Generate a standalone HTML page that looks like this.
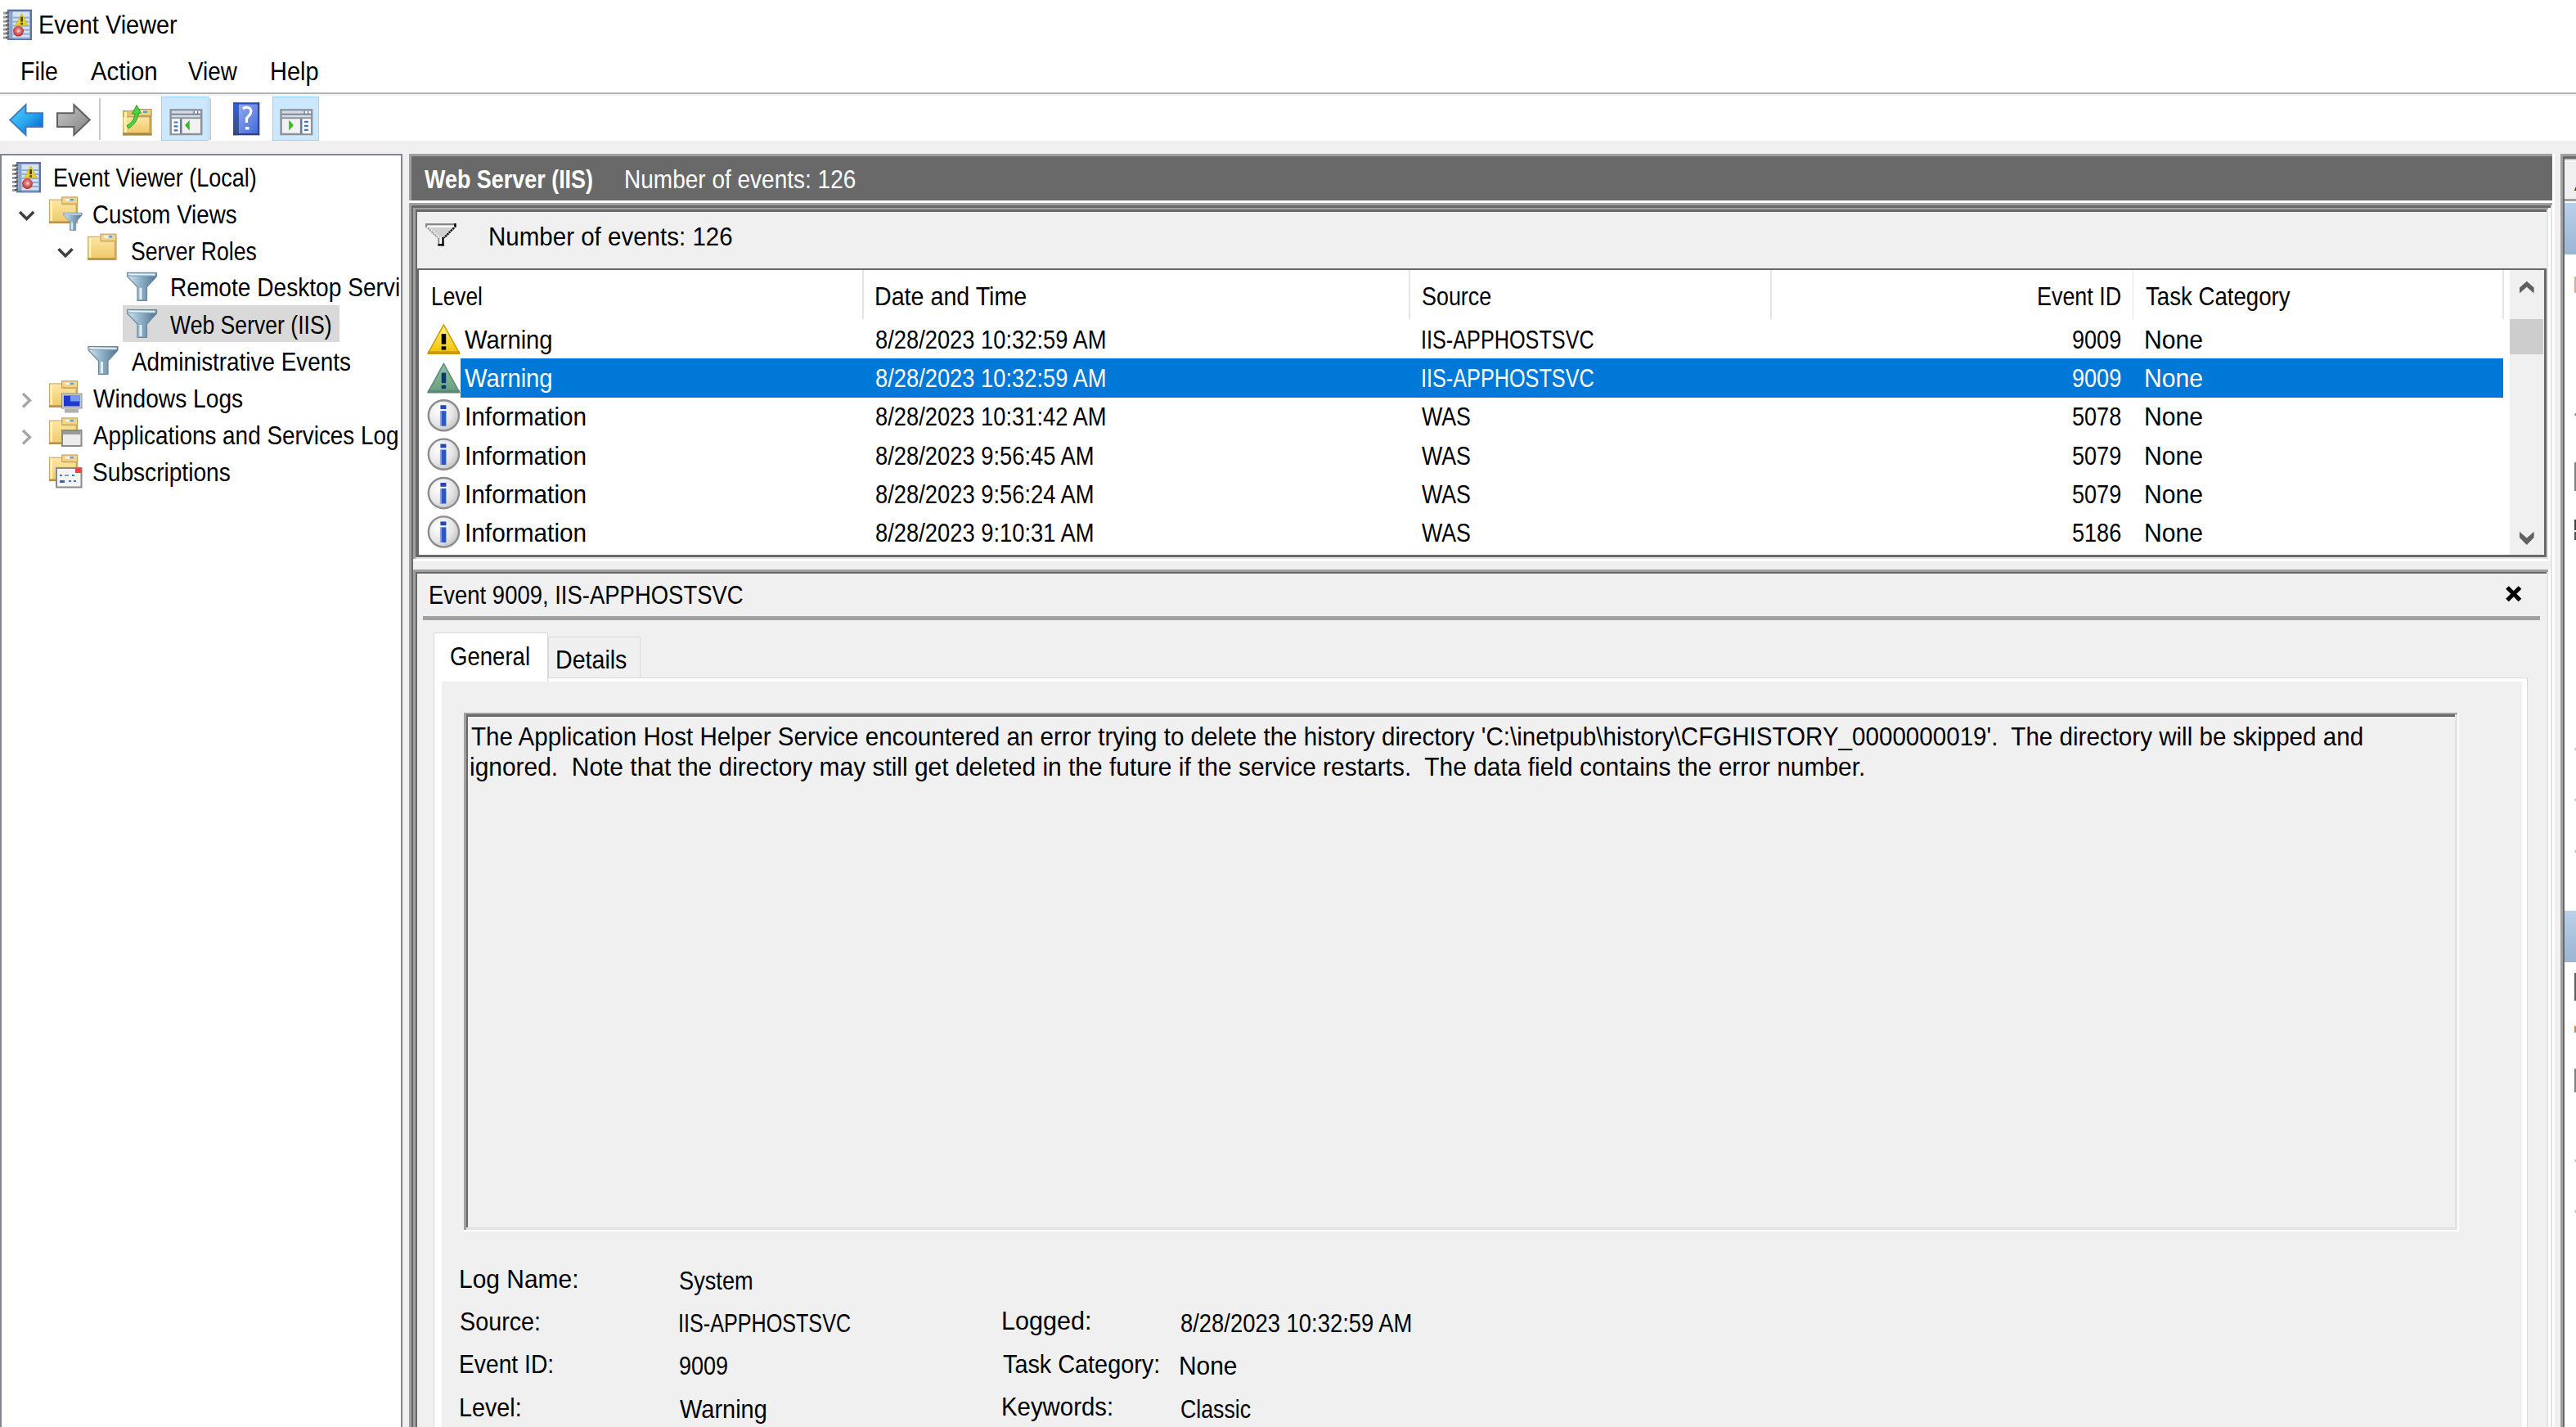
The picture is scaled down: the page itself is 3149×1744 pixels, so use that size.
<!DOCTYPE html>
<html><head><meta charset="utf-8"><style>
html,body{margin:0;padding:0;width:3149px;height:1744px;overflow:hidden;background:#f0f0f0;position:relative}
body div,body svg{position:absolute}
.t{position:absolute;white-space:pre;font-family:"Liberation Sans", sans-serif;font-size:30.5px;line-height:30.5px;transform-origin:0 0}
</style></head><body>
<div style="left:0px;top:0px;width:3149px;height:172px;background:#fff;"></div>
<div style="left:0px;top:113px;width:3149px;height:2px;background:#b4b4b4;"></div>
<div style="left:0px;top:115px;width:3149px;height:2px;background:#f2f6fa;"></div>
<div style="left:197px;top:118px;width:58px;height:54px;background:#cce8ff;box-shadow:inset 0 0 0 1px #99d1ff"></div>
<div style="left:332.5px;top:118px;width:57.5px;height:54px;background:#cce8ff;box-shadow:inset 0 0 0 1px #99d1ff"></div>
<div style="left:121px;top:120px;width:2px;height:51px;background:#c8c8c8;"></div>
<div style="left:256px;top:120px;width:2px;height:51px;background:#c8c8c8;"></div>
<div style="left:0px;top:188px;width:492.3px;height:1556px;background:#828790;"></div>
<div style="left:2px;top:190.4px;width:488px;height:1554px;background:#fff;"></div>
<div style="left:150px;top:373px;width:265px;height:45px;background:#d9d9d9;"></div>
<div style="left:500px;top:188px;width:2622.5px;height:60px;background:#fff;"></div>
<div style="left:500px;top:188px;width:2620px;height:57px;background:#a0a0a0;"></div>
<div style="left:503px;top:191px;width:2617px;height:54px;background:#696969;"></div>
<div style="left:500px;top:248px;width:2622.5px;height:1496px;background:#fff;"></div>
<div style="left:500px;top:248px;width:2620px;height:1496px;background:#a0a0a0;"></div>
<div style="left:502.5px;top:251px;width:2617.5px;height:1493px;background:#e3e3e3;"></div>
<div style="left:502.5px;top:251px;width:2615px;height:1493px;background:#696969;"></div>
<div style="left:505px;top:253.5px;width:2612.5px;height:1490.5px;background:#f0f0f0;"></div>
<div style="left:505px;top:253.5px;width:2612.5px;height:432.3px;background:#fff;"></div>
<div style="left:505px;top:253.5px;width:2610px;height:429.8px;background:#a0a0a0;"></div>
<div style="left:507.5px;top:256px;width:2607.5px;height:427.3px;background:#e3e3e3;"></div>
<div style="left:507.5px;top:256px;width:2605px;height:424.8px;background:#696969;"></div>
<div style="left:510px;top:258.5px;width:2602.5px;height:422.3px;background:#f0f0f0;"></div>
<div style="left:510px;top:328px;width:2602.5px;height:352.8px;background:#696969;"></div>
<div style="left:512px;top:330px;width:2598px;height:348.3px;background:#fff;"></div>
<div style="left:562.5px;top:438px;width:2497.5px;height:47.5px;background:#0078d7;"></div>
<div style="left:1054px;top:330px;width:1.5px;height:60px;background:#e5e5e5;"></div>
<div style="left:1722px;top:330px;width:1.5px;height:60px;background:#e5e5e5;"></div>
<div style="left:2164px;top:330px;width:1.5px;height:60px;background:#e5e5e5;"></div>
<div style="left:2606.5px;top:330px;width:1.5px;height:60px;background:#e5e5e5;"></div>
<div style="left:3059px;top:330px;width:1.5px;height:60px;background:#e5e5e5;"></div>
<div style="left:3068px;top:330px;width:42px;height:348.3px;background:#f0f0f0;"></div>
<div style="left:3068px;top:390px;width:41px;height:43px;background:#cdcdcd;"></div>
<div style="left:505px;top:696px;width:2612.5px;height:1068px;background:#fff;"></div>
<div style="left:505px;top:696px;width:2610px;height:1065.5px;background:#a0a0a0;"></div>
<div style="left:507.5px;top:698.5px;width:2607.5px;height:1063px;background:#e3e3e3;"></div>
<div style="left:507.5px;top:698.5px;width:2605px;height:1060.5px;background:#696969;"></div>
<div style="left:510px;top:701px;width:2602.5px;height:1058px;background:#f0f0f0;"></div>
<div style="left:517px;top:753px;width:2588px;height:4.5px;background:#a0a0a0;"></div>
<div style="left:530px;top:828px;width:2560px;height:936px;background:#d9d9d9;"></div>
<div style="left:531px;top:829px;width:2558px;height:935px;background:#fff;"></div>
<div style="left:669.6px;top:778px;width:113px;height:51px;background:#d9d9d9;"></div>
<div style="left:670.6px;top:779px;width:111px;height:49px;background:#f0f0f0;"></div>
<div style="left:530px;top:773.2px;width:139.6px;height:60px;background:#d9d9d9;"></div>
<div style="left:531px;top:774.2px;width:137.6px;height:60px;background:#fff;"></div>
<div style="left:540px;top:833px;width:2543px;height:931px;background:#f0f0f0;"></div>
<div style="left:567.4px;top:870.7px;width:2439.1px;height:634.8px;background:#fff;"></div>
<div style="left:567.4px;top:870.7px;width:2436.6px;height:632.3px;background:#a0a0a0;"></div>
<div style="left:569.9px;top:873.2px;width:2434.1px;height:629.8px;background:#e3e3e3;"></div>
<div style="left:569.9px;top:873.2px;width:2431.6px;height:627.3px;background:#696969;"></div>
<div style="left:572.4px;top:875.7px;width:2429.1px;height:624.8px;background:#f0f0f0;"></div>
<div style="left:3130px;top:188px;width:30px;height:1556px;background:#a0a0a0;"></div>
<div style="left:3132.8px;top:191px;width:30px;height:1553px;background:#696969;"></div>
<div style="left:3135px;top:193.5px;width:30px;height:1550.5px;background:#fff;"></div>
<div style="left:3135px;top:193.5px;width:30px;height:2.5px;background:#c4c4c4;"></div>
<div style="left:3135px;top:198px;width:30px;height:45px;background:#f0f0f0;"></div>
<div style="left:3135px;top:243px;width:30px;height:2.5px;background:#a0a0a0;"></div>
<div style="left:3135px;top:248px;width:30px;height:62.5px;background:linear-gradient(#bad1ea,#9ab4d3);"></div>
<div style="left:3135px;top:1113px;width:30px;height:63px;background:linear-gradient(#bad1ea,#9ab4d3);"></div>
<span class="t" style="left:47.00px;top:15px;color:#000;transform:scaleX(0.9475)">Event Viewer</span>
<span class="t" style="left:24.93px;top:72px;color:#000;transform:scaleX(0.9332)">File</span>
<span class="t" style="left:110.60px;top:72px;color:#000;transform:scaleX(0.9637)">Action</span>
<span class="t" style="left:230.00px;top:72px;color:#000;transform:scaleX(0.9109)">View</span>
<span class="t" style="left:330.10px;top:72px;color:#000;transform:scaleX(0.9504)">Help</span>
<span class="t" style="left:64.93px;top:202px;color:#000;transform:scaleX(0.8859)">Event Viewer (Local)</span>
<span class="t" style="left:112.79px;top:247px;color:#000;transform:scaleX(0.9083)">Custom Views</span>
<span class="t" style="left:160.43px;top:292px;color:#000;transform:scaleX(0.8724)">Server Roles</span>
<span class="t" style="left:208.06px;top:336px;color:#000;transform:scaleX(0.9215)">Remote Desktop Servi</span>
<span class="t" style="left:208.00px;top:382px;color:#000;transform:scaleX(0.8723)">Web Server (IIS)</span>
<span class="t" style="left:161.20px;top:427px;color:#000;transform:scaleX(0.9133)">Administrative Events</span>
<span class="t" style="left:113.70px;top:472px;color:#000;transform:scaleX(0.9233)">Windows Logs</span>
<span class="t" style="left:113.70px;top:517px;color:#000;transform:scaleX(0.9143)">Applications and Services Log</span>
<span class="t" style="left:112.78px;top:562px;color:#000;transform:scaleX(0.9217)">Subscriptions</span>
<span class="t" style="left:518.60px;top:204px;color:#fff;transform:scaleX(0.8829);font-weight:bold">Web Server (IIS)</span>
<span class="t" style="left:762.56px;top:204px;color:#fff;transform:scaleX(0.9182)">Number of events: 126</span>
<span class="t" style="left:597.06px;top:274px;color:#000;transform:scaleX(0.9679)">Number of events: 126</span>
<span class="t" style="left:527.07px;top:347px;color:#000;transform:scaleX(0.8635)">Level</span>
<span class="t" style="left:1069.12px;top:347px;color:#000;transform:scaleX(0.9391)">Date and Time</span>
<span class="t" style="left:1737.52px;top:347px;color:#000;transform:scaleX(0.8820)">Source</span>
<span class="t" style="left:2489.74px;top:347px;color:#000;transform:scaleX(0.8820)">Event ID</span>
<span class="t" style="left:2623.20px;top:347px;color:#000;transform:scaleX(0.9060)">Task Category</span>
<span class="t" style="left:567.80px;top:400px;color:#000;transform:scaleX(0.9568)">Warning</span>
<span class="t" style="left:1070.10px;top:400px;color:#000;transform:scaleX(0.8954)">8/28/2023 10:32:59 AM</span>
<span class="t" style="left:1736.75px;top:400px;color:#000;transform:scaleX(0.8272)">IIS-APPHOSTSVC</span>
<span class="t" style="left:2532.61px;top:400px;color:#000;transform:scaleX(0.8879)">9009</span>
<span class="t" style="left:2621.22px;top:400px;color:#000;transform:scaleX(0.9893)">None</span>
<span class="t" style="left:567.80px;top:447px;color:#fff;transform:scaleX(0.9568)">Warning</span>
<span class="t" style="left:1070.10px;top:447px;color:#fff;transform:scaleX(0.8954)">8/28/2023 10:32:59 AM</span>
<span class="t" style="left:1736.75px;top:447px;color:#fff;transform:scaleX(0.8272)">IIS-APPHOSTSVC</span>
<span class="t" style="left:2532.61px;top:447px;color:#fff;transform:scaleX(0.8879)">9009</span>
<span class="t" style="left:2621.22px;top:447px;color:#fff;transform:scaleX(0.9893)">None</span>
<span class="t" style="left:568.04px;top:494px;color:#000;transform:scaleX(0.9777)">Information</span>
<span class="t" style="left:1070.10px;top:494px;color:#000;transform:scaleX(0.8954)">8/28/2023 10:31:42 AM</span>
<span class="t" style="left:1738.40px;top:494px;color:#000;transform:scaleX(0.8776)">WAS</span>
<span class="t" style="left:2532.61px;top:494px;color:#000;transform:scaleX(0.8879)">5078</span>
<span class="t" style="left:2621.22px;top:494px;color:#000;transform:scaleX(0.9893)">None</span>
<span class="t" style="left:568.04px;top:542px;color:#000;transform:scaleX(0.9777)">Information</span>
<span class="t" style="left:1070.10px;top:542px;color:#000;transform:scaleX(0.8964)">8/28/2023 9:56:45 AM</span>
<span class="t" style="left:1738.40px;top:542px;color:#000;transform:scaleX(0.8776)">WAS</span>
<span class="t" style="left:2532.61px;top:542px;color:#000;transform:scaleX(0.8879)">5079</span>
<span class="t" style="left:2621.22px;top:542px;color:#000;transform:scaleX(0.9893)">None</span>
<span class="t" style="left:568.04px;top:589px;color:#000;transform:scaleX(0.9777)">Information</span>
<span class="t" style="left:1070.10px;top:589px;color:#000;transform:scaleX(0.8964)">8/28/2023 9:56:24 AM</span>
<span class="t" style="left:1738.40px;top:589px;color:#000;transform:scaleX(0.8776)">WAS</span>
<span class="t" style="left:2532.61px;top:589px;color:#000;transform:scaleX(0.8879)">5079</span>
<span class="t" style="left:2621.22px;top:589px;color:#000;transform:scaleX(0.9893)">None</span>
<span class="t" style="left:568.04px;top:636px;color:#000;transform:scaleX(0.9777)">Information</span>
<span class="t" style="left:1070.10px;top:636px;color:#000;transform:scaleX(0.8964)">8/28/2023 9:10:31 AM</span>
<span class="t" style="left:1738.40px;top:636px;color:#000;transform:scaleX(0.8776)">WAS</span>
<span class="t" style="left:2532.61px;top:636px;color:#000;transform:scaleX(0.8879)">5186</span>
<span class="t" style="left:2621.22px;top:636px;color:#000;transform:scaleX(0.9893)">None</span>
<span class="t" style="left:523.80px;top:712px;color:#000;transform:scaleX(0.9004)">Event 9009, IIS-APPHOSTSVC</span>
<span class="t" style="left:549.60px;top:787px;color:#000;transform:scaleX(0.9032)">General</span>
<span class="t" style="left:679.12px;top:791px;color:#000;transform:scaleX(0.9376)">Details</span>
<span class="t" style="left:575.70px;top:885px;color:#000;transform:scaleX(0.9698)">The Application Host Helper Service encountered an error trying to delete the history directory 'C:\inetpub\history\CFGHISTORY_0000000019'.  The directory will be skipped and</span>
<span class="t" style="left:573.74px;top:922px;color:#000;transform:scaleX(0.9813)">ignored.  Note that the directory may still get deleted in the future if the service restarts.  The data field contains the error number.</span>
<span class="t" style="left:561.34px;top:1548px;color:#000;transform:scaleX(0.9819)">Log Name:</span>
<span class="t" style="left:830.31px;top:1550px;color:#000;transform:scaleX(0.8914)">System</span>
<span class="t" style="left:562.06px;top:1600px;color:#000;transform:scaleX(0.9426)">Source:</span>
<span class="t" style="left:829.35px;top:1602px;color:#000;transform:scaleX(0.8249)">IIS-APPHOSTSVC</span>
<span class="t" style="left:561.15px;top:1652px;color:#000;transform:scaleX(0.9259)">Event ID:</span>
<span class="t" style="left:830.11px;top:1654px;color:#000;transform:scaleX(0.8864)">9009</span>
<span class="t" style="left:561.11px;top:1705px;color:#000;transform:scaleX(0.9426)">Level:</span>
<span class="t" style="left:831.00px;top:1707px;color:#000;transform:scaleX(0.9504)">Warning</span>
<span class="t" style="left:1223.60px;top:1599px;color:#000;transform:scaleX(1.0021)">Logged:</span>
<span class="t" style="left:1442.50px;top:1602px;color:#000;transform:scaleX(0.8986)">8/28/2023 10:32:59 AM</span>
<span class="t" style="left:1225.60px;top:1652px;color:#000;transform:scaleX(0.9450)">Task Category:</span>
<span class="t" style="left:1441.44px;top:1654px;color:#000;transform:scaleX(0.9807)">None</span>
<span class="t" style="left:1223.67px;top:1704px;color:#000;transform:scaleX(0.9629)">Keywords:</span>
<span class="t" style="left:1442.52px;top:1707px;color:#000;transform:scaleX(0.8759)">Classic</span>
<svg width="3149" height="1744" style="left:0;top:0;pointer-events:none">
<defs>
 <linearGradient id="gFold" x1="0" y1="0" x2="0" y2="1"><stop offset="0" stop-color="#fde7a4"/><stop offset="1" stop-color="#f0c86a"/></linearGradient>
 <linearGradient id="gFoldBack" x1="0" y1="0" x2="0" y2="1"><stop offset="0" stop-color="#f3d68c"/><stop offset="1" stop-color="#e2bb62"/></linearGradient>
 <linearGradient id="gFun" x1="0" y1="0" x2="1" y2="0"><stop offset="0" stop-color="#d6e6f0"/><stop offset="0.45" stop-color="#8fb2c8"/><stop offset="1" stop-color="#4f7390"/></linearGradient>
 <linearGradient id="gFunTop" x1="0" y1="0" x2="0" y2="1"><stop offset="0" stop-color="#c9dde9"/><stop offset="1" stop-color="#7f9fb5"/></linearGradient>
 <linearGradient id="gWarn" x1="0" y1="0" x2="0" y2="1"><stop offset="0" stop-color="#fff27a"/><stop offset="1" stop-color="#f2c200"/></linearGradient>
 <linearGradient id="gWarnSel" x1="0" y1="0" x2="0" y2="1"><stop offset="0" stop-color="#8cc4a0"/><stop offset="1" stop-color="#6a9c80"/></linearGradient>
 <radialGradient id="gInfo" cx="0.35" cy="0.35" r="0.75"><stop offset="0" stop-color="#ffffff"/><stop offset="0.6" stop-color="#e6e6e6"/><stop offset="1" stop-color="#bdbdbd"/></radialGradient>
 <linearGradient id="gBack" x1="0" y1="0" x2="1" y2="1"><stop offset="0" stop-color="#5fd0ff"/><stop offset="0.5" stop-color="#29a8f0"/><stop offset="1" stop-color="#0058c0"/></linearGradient>
 <linearGradient id="gFwd" x1="0" y1="0" x2="1" y2="1"><stop offset="0" stop-color="#c8c8c8"/><stop offset="1" stop-color="#808080"/></linearGradient>
 <linearGradient id="gHelp" x1="0" y1="0" x2="1" y2="1"><stop offset="0" stop-color="#9fb4f4"/><stop offset="1" stop-color="#3d66d8"/></linearGradient>
 <linearGradient id="gHelpL" x1="0" y1="0" x2="0" y2="1"><stop offset="0" stop-color="#2f63d8"/><stop offset="1" stop-color="#3a4a80"/></linearGradient>
 <radialGradient id="gRed" cx="0.5" cy="0.45" r="0.55"><stop offset="0" stop-color="#f0a8a8"/><stop offset="0.6" stop-color="#d86060"/><stop offset="1" stop-color="#b81c1c"/></radialGradient>
 <linearGradient id="gAct" x1="0" y1="0" x2="0" y2="1"><stop offset="0" stop-color="#bad1ea"/><stop offset="1" stop-color="#9ab4d3"/></linearGradient>
</defs>
<g transform="translate(4,11.6)"><rect x="5" y="0" width="30" height="37.4" fill="#5f70a4"/><rect x="7.5" y="2.5" width="25" height="32.4" fill="#d3e3f3"/><rect x="7.5" y="2.5" width="4" height="32.4" fill="#8aa3cc"/><rect x="11.5" y="9" width="21" height="2" fill="#8eafd2"/><rect x="11.5" y="14" width="21" height="2" fill="#8eafd2"/><rect x="11.5" y="19" width="21" height="2" fill="#8eafd2"/><rect x="11.5" y="24" width="21" height="2" fill="#8eafd2"/><rect x="11.5" y="29" width="21" height="2" fill="#8eafd2"/><rect x="11.5" y="34" width="21" height="2" fill="#8eafd2"/><rect x="0" y="3" width="7" height="3" fill="#9a9a9a"/><rect x="3" y="3" width="4" height="2" fill="#5a5a5a"/><rect x="0" y="8" width="7" height="3" fill="#9a9a9a"/><rect x="3" y="8" width="4" height="2" fill="#5a5a5a"/><rect x="0" y="13" width="7" height="3" fill="#9a9a9a"/><rect x="3" y="13" width="4" height="2" fill="#5a5a5a"/><rect x="0" y="18" width="7" height="3" fill="#9a9a9a"/><rect x="3" y="18" width="4" height="2" fill="#5a5a5a"/><rect x="0" y="23" width="7" height="3" fill="#9a9a9a"/><rect x="3" y="23" width="4" height="2" fill="#5a5a5a"/><rect x="0" y="28" width="7" height="3" fill="#9a9a9a"/><rect x="3" y="28" width="4" height="2" fill="#5a5a5a"/><rect x="0" y="33" width="7" height="3" fill="#9a9a9a"/><rect x="3" y="33" width="4" height="2" fill="#5a5a5a"/><path d="M22.5 4.8 L30.2 19.6 L14.8 19.6 Z" fill="#e8cf22" stroke="#c8b040" stroke-width="0.8"/><rect x="21.2" y="9" width="2.8" height="6" fill="#4a4a10"/><rect x="21.2" y="16.2" width="2.8" height="2.4" fill="#4a4a10"/><circle cx="18.5" cy="26.5" r="6.4" fill="url(#gRed)"/><rect x="17.5" y="25" width="2.5" height="2.5" fill="#f4d0d0"/></g><path d="M12.2 146.6 L31.5 128.2 L31.5 138.3 L52 138.3 L52 155 L31.5 155 L31.5 165 Z" fill="url(#gBack)" stroke="#3a7cc0" stroke-width="2"/><path d="M109.8 146.6 L90.4 128.2 L90.4 138.3 L70 138.3 L70 155 L90.4 155 L90.4 165 Z" fill="url(#gFwd)" stroke="#606060" stroke-width="2"/><g transform="translate(150,133)"><rect x="0.5" y="2.5" width="34.5" height="29.5" fill="#e6c272" stroke="#b8964e" stroke-width="1"/><rect x="19.5" y="0.5" width="15.5" height="8" fill="#ecd08a" stroke="#b8964e" stroke-width="1"/><rect x="24.5" y="2.6" width="5.5" height="2.4" fill="#4aa0ff"/><rect x="21" y="2.6" width="3.5" height="2.4" fill="#fff"/><rect x="0.5" y="9.5" width="34.5" height="20" fill="url(#gFold)"/><rect x="0.5" y="9" width="34.5" height="1.5" fill="#c9a860"/><rect x="2" y="4" width="3" height="25" fill="#fff0b0"/><rect x="0" y="29.3" width="35.5" height="3" fill="#a88a48"/><rect x="32.5" y="9" width="2.5" height="21" fill="#c2a058"/></g><path d="M155 153.5 C160 151 164.5 146 165 139 L161.5 139 L167 128.5 L172.5 138 L169 138.5 C168.5 147 163.5 153 157 157 Z" fill="#4cd43e" stroke="#2e9a28" stroke-width="1"/><g transform="translate(207.5,133.2)"><rect x="1.2" y="1.2" width="37.5" height="29.6" fill="#f2f2f2" stroke="#8e9298" stroke-width="2.5"/><rect x="2.5" y="2.5" width="35" height="3" fill="#d6dce6"/><rect x="29" y="2.5" width="1.5" height="3" fill="#6b7a96"/><rect x="33.5" y="2.5" width="1.5" height="3" fill="#6b7a96"/><rect x="30.5" y="3" width="2.5" height="2" fill="#fff"/><rect x="35" y="3" width="2.5" height="2" fill="#fff"/><rect x="2.5" y="5.5" width="35" height="2" fill="#6b7a96"/><rect x="2.5" y="7.5" width="35" height="2.5" fill="#d6dce6"/><rect x="2.5" y="10" width="35" height="2" fill="#8e9298"/><rect x="2.5" y="12" width="10" height="18" fill="#f6f6f6"/><rect x="12.5" y="12" width="2.5" height="18" fill="#6b7a96"/><rect x="5" y="15.2" width="5" height="2.2" rx="1" fill="#3c78c0"/><rect x="5" y="20" width="5" height="2.2" rx="1" fill="#3c78c0"/><rect x="5" y="25" width="5" height="2.2" rx="1" fill="#3c78c0"/><path d="M19.5 19.8 L23.5 15.5 L23.5 24.5 Z" fill="#3fb82a" stroke="#3fb82a" stroke-width="1.5"/></g><rect x="285" y="125.3" width="32.2" height="39.9" fill="url(#gHelp)"/><rect x="285" y="125.3" width="7" height="39.9" fill="url(#gHelpL)"/><rect x="285" y="125.3" width="32.2" height="2.2" fill="#2a4ac8"/><rect x="285" y="163" width="32.2" height="2.2" fill="#38406a"/><rect x="315" y="125.3" width="2.2" height="39.9" fill="#34488a"/><path d="M297 133 Q301 129.5 305.5 132.5 Q308.5 136 305 140.5 L301.5 144.5 L301.5 150" fill="none" stroke="#fff" stroke-width="3.2"/><rect x="300" y="155" width="4.5" height="3.5" fill="#fff"/><g transform="translate(342.4,133.2)"><rect x="1.2" y="1.2" width="37.5" height="29.6" fill="#f2f2f2" stroke="#8e9298" stroke-width="2.5"/><rect x="2.5" y="2.5" width="35" height="3" fill="#d6dce6"/><rect x="29" y="2.5" width="1.5" height="3" fill="#6b7a96"/><rect x="33.5" y="2.5" width="1.5" height="3" fill="#6b7a96"/><rect x="30.5" y="3" width="2.5" height="2" fill="#fff"/><rect x="35" y="3" width="2.5" height="2" fill="#fff"/><rect x="2.5" y="5.5" width="35" height="2" fill="#6b7a96"/><rect x="2.5" y="7.5" width="35" height="2.5" fill="#d6dce6"/><rect x="2.5" y="10" width="35" height="2" fill="#8e9298"/><rect x="28" y="12" width="9.5" height="18" fill="#f6f6f6"/><rect x="24.5" y="12" width="2.5" height="18" fill="#6b7a96"/><rect x="29.5" y="14.5" width="5" height="2.2" rx="1" fill="#3c78c0"/><rect x="29.5" y="19.5" width="5" height="2.2" rx="1" fill="#3c78c0"/><rect x="29.5" y="24.5" width="5" height="2.2" rx="1" fill="#3c78c0"/><path d="M15.5 19.8 L11.5 15.5 L11.5 24.5 Z" fill="#3fb82a" stroke="#3fb82a" stroke-width="1.5"/></g><g transform="translate(15,198)"><rect x="5" y="0" width="30" height="37.4" fill="#5f70a4"/><rect x="7.5" y="2.5" width="25" height="32.4" fill="#d3e3f3"/><rect x="7.5" y="2.5" width="4" height="32.4" fill="#8aa3cc"/><rect x="11.5" y="9" width="21" height="2" fill="#8eafd2"/><rect x="11.5" y="14" width="21" height="2" fill="#8eafd2"/><rect x="11.5" y="19" width="21" height="2" fill="#8eafd2"/><rect x="11.5" y="24" width="21" height="2" fill="#8eafd2"/><rect x="11.5" y="29" width="21" height="2" fill="#8eafd2"/><rect x="11.5" y="34" width="21" height="2" fill="#8eafd2"/><rect x="0" y="3" width="7" height="3" fill="#9a9a9a"/><rect x="3" y="3" width="4" height="2" fill="#5a5a5a"/><rect x="0" y="8" width="7" height="3" fill="#9a9a9a"/><rect x="3" y="8" width="4" height="2" fill="#5a5a5a"/><rect x="0" y="13" width="7" height="3" fill="#9a9a9a"/><rect x="3" y="13" width="4" height="2" fill="#5a5a5a"/><rect x="0" y="18" width="7" height="3" fill="#9a9a9a"/><rect x="3" y="18" width="4" height="2" fill="#5a5a5a"/><rect x="0" y="23" width="7" height="3" fill="#9a9a9a"/><rect x="3" y="23" width="4" height="2" fill="#5a5a5a"/><rect x="0" y="28" width="7" height="3" fill="#9a9a9a"/><rect x="3" y="28" width="4" height="2" fill="#5a5a5a"/><rect x="0" y="33" width="7" height="3" fill="#9a9a9a"/><rect x="3" y="33" width="4" height="2" fill="#5a5a5a"/><path d="M22.5 4.8 L30.2 19.6 L14.8 19.6 Z" fill="#e8cf22" stroke="#c8b040" stroke-width="0.8"/><rect x="21.2" y="9" width="2.8" height="6" fill="#4a4a10"/><rect x="21.2" y="16.2" width="2.8" height="2.4" fill="#4a4a10"/><circle cx="18.5" cy="26.5" r="6.4" fill="url(#gRed)"/><rect x="17.5" y="25" width="2.5" height="2.5" fill="#f4d0d0"/></g><path d="M24.1 259.0 L32.6 267.5 L41.1 259.0" fill="none" stroke="#404040" stroke-width="3.6"/><g transform="translate(59.9,240.4)"><rect x="0.5" y="3.7" width="34.2" height="28.400000000000002" fill="url(#gFold)" stroke="#c3a25a" stroke-width="1"/><rect x="15.8" y="0.5" width="18.900000000000002" height="8.3" fill="#f4d48a" stroke="#b89a5a" stroke-width="1"/><rect x="16.3" y="8.3" width="18.400000000000002" height="1.6" fill="#d0ac62"/><rect x="20" y="2.6" width="7" height="2.2" fill="#ffffff"/><rect x="25.5" y="2.6" width="4.5" height="2.2" fill="#4aa0ff"/><rect x="0" y="30.1" width="35.2" height="2.5" fill="#b4924c"/><rect x="32.7" y="9" width="2.5" height="23.6" fill="#c9a85c"/><rect x="1.8" y="5" width="2.2" height="24.6" fill="#fff3c0"/></g><g transform="translate(77.5,260) scale(0.62)"><path d="M0.5 0.5 L36.5 0.5 L36.5 5 L24.5 18 L24.5 34.5 L13 34.5 L13 18 L0.5 5 Z" fill="url(#gFun)" stroke="#6b8799" stroke-width="1.2"/><rect x="1.5" y="1.5" width="34" height="3.5" fill="url(#gFunTop)"/><rect x="3" y="2" width="31" height="1.5" fill="#e8f2f8"/><rect x="15.5" y="19" width="3" height="14" fill="#e4eef4"/></g><path d="M71.5 304.3 L80 312.8 L88.5 304.3" fill="none" stroke="#404040" stroke-width="3.6"/><g transform="translate(107.2,285.6)"><rect x="0.5" y="3.7" width="34.2" height="27.900000000000002" fill="url(#gFold)" stroke="#c3a25a" stroke-width="1"/><rect x="15.8" y="0.5" width="18.900000000000002" height="8.3" fill="#f4d48a" stroke="#b89a5a" stroke-width="1"/><rect x="16.3" y="8.3" width="18.400000000000002" height="1.6" fill="#d0ac62"/><rect x="20" y="2.6" width="7" height="2.2" fill="#ffffff"/><rect x="25.5" y="2.6" width="4.5" height="2.2" fill="#4aa0ff"/><rect x="0" y="29.6" width="35.2" height="2.5" fill="#b4924c"/><rect x="32.7" y="9" width="2.5" height="23.1" fill="#c9a85c"/><rect x="1.8" y="5" width="2.2" height="24.1" fill="#fff3c0"/></g><g transform="translate(155,332.8) scale(1.0)"><path d="M0.5 0.5 L36.5 0.5 L36.5 5 L24.5 18 L24.5 34.5 L13 34.5 L13 18 L0.5 5 Z" fill="url(#gFun)" stroke="#6b8799" stroke-width="1.2"/><rect x="1.5" y="1.5" width="34" height="3.5" fill="url(#gFunTop)"/><rect x="3" y="2" width="31" height="1.5" fill="#e8f2f8"/><rect x="15.5" y="19" width="3" height="14" fill="#e4eef4"/></g><g transform="translate(155,378) scale(1.0)"><path d="M0.5 0.5 L36.5 0.5 L36.5 5 L24.5 18 L24.5 34.5 L13 34.5 L13 18 L0.5 5 Z" fill="url(#gFun)" stroke="#6b8799" stroke-width="1.2"/><rect x="1.5" y="1.5" width="34" height="3.5" fill="url(#gFunTop)"/><rect x="3" y="2" width="31" height="1.5" fill="#e8f2f8"/><rect x="15.5" y="19" width="3" height="14" fill="#e4eef4"/></g><g transform="translate(107.5,423) scale(1.0)"><path d="M0.5 0.5 L36.5 0.5 L36.5 5 L24.5 18 L24.5 34.5 L13 34.5 L13 18 L0.5 5 Z" fill="url(#gFun)" stroke="#6b8799" stroke-width="1.2"/><rect x="1.5" y="1.5" width="34" height="3.5" fill="url(#gFunTop)"/><rect x="3" y="2" width="31" height="1.5" fill="#e8f2f8"/><rect x="15.5" y="19" width="3" height="14" fill="#e4eef4"/></g><path d="M28.0 481.0 L36.5 489.3 L28.0 497.5" fill="none" stroke="#a6a6a6" stroke-width="3.4"/><g transform="translate(59.9,465.2)"><rect x="0.5" y="3.7" width="34.2" height="28.400000000000002" fill="url(#gFold)" stroke="#c3a25a" stroke-width="1"/><rect x="15.8" y="0.5" width="18.900000000000002" height="8.3" fill="#f4d48a" stroke="#b89a5a" stroke-width="1"/><rect x="16.3" y="8.3" width="18.400000000000002" height="1.6" fill="#d0ac62"/><rect x="20" y="2.6" width="7" height="2.2" fill="#ffffff"/><rect x="25.5" y="2.6" width="4.5" height="2.2" fill="#4aa0ff"/><rect x="0" y="30.1" width="35.2" height="2.5" fill="#b4924c"/><rect x="32.7" y="9" width="2.5" height="23.6" fill="#c9a85c"/><rect x="1.8" y="5" width="2.2" height="24.6" fill="#fff3c0"/></g><rect x="75.5" y="481" width="24.5" height="18" fill="#c8c8c8" stroke="#909090" stroke-width="1"/><rect x="78" y="483.5" width="19.5" height="13" fill="#1a3ad0"/><rect x="86" y="483.5" width="11.5" height="7" fill="#7a9af0"/><rect x="79" y="500" width="17" height="4.5" fill="#b0b0b0"/><path d="M28.0 526.0 L36.5 534.3 L28.0 542.5" fill="none" stroke="#a6a6a6" stroke-width="3.4"/><g transform="translate(59.9,510.4)"><rect x="0.5" y="3.7" width="34.2" height="28.400000000000002" fill="url(#gFold)" stroke="#c3a25a" stroke-width="1"/><rect x="15.8" y="0.5" width="18.900000000000002" height="8.3" fill="#f4d48a" stroke="#b89a5a" stroke-width="1"/><rect x="16.3" y="8.3" width="18.400000000000002" height="1.6" fill="#d0ac62"/><rect x="20" y="2.6" width="7" height="2.2" fill="#ffffff"/><rect x="25.5" y="2.6" width="4.5" height="2.2" fill="#4aa0ff"/><rect x="0" y="30.1" width="35.2" height="2.5" fill="#b4924c"/><rect x="32.7" y="9" width="2.5" height="23.6" fill="#c9a85c"/><rect x="1.8" y="5" width="2.2" height="24.6" fill="#fff3c0"/></g><rect x="76" y="526" width="23.5" height="19" fill="#ececec" stroke="#8a8a8a" stroke-width="2"/><rect x="77" y="527" width="21.5" height="4" fill="#9a9a9a"/><g transform="translate(59.9,555.5)"><rect x="0.5" y="3.7" width="34.2" height="28.400000000000002" fill="url(#gFold)" stroke="#c3a25a" stroke-width="1"/><rect x="15.8" y="0.5" width="18.900000000000002" height="8.3" fill="#f4d48a" stroke="#b89a5a" stroke-width="1"/><rect x="16.3" y="8.3" width="18.400000000000002" height="1.6" fill="#d0ac62"/><rect x="20" y="2.6" width="7" height="2.2" fill="#ffffff"/><rect x="25.5" y="2.6" width="4.5" height="2.2" fill="#4aa0ff"/><rect x="0" y="30.1" width="35.2" height="2.5" fill="#b4924c"/><rect x="32.7" y="9" width="2.5" height="23.6" fill="#c9a85c"/><rect x="1.8" y="5" width="2.2" height="24.6" fill="#fff3c0"/></g><rect x="69" y="572" width="30.5" height="23.5" fill="#f4f4f4" stroke="#8a8a8a" stroke-width="2"/><rect x="92" y="572" width="7.5" height="6" fill="#f04040"/><rect x="73" y="580" width="3" height="2" fill="#3a78c0"/><rect x="79" y="580" width="5" height="2" fill="#8a9ab0"/><rect x="88" y="580" width="3" height="2" fill="#3a78c0"/><rect x="73" y="587" width="6" height="3" fill="#2a68c0"/><rect x="84" y="587" width="3" height="2" fill="#3a78c0"/><rect x="90" y="587" width="3" height="2" fill="#3a78c0"/><rect x="520" y="273" width="37.5" height="2.6" fill="#888"/><rect x="520" y="273" width="2.2" height="5" fill="#888"/><rect x="522.2" y="275.6" width="33" height="2.2" fill="#fff"/><rect x="555.2" y="273" width="2.4" height="5" fill="#000"/><path d="M522.5 277.8 L555 277.8 L543 290.5 L535 290.5 Z" fill="#d2d2d2"/><path d="M523 278.5 L535 290" stroke="#8a8a8a" stroke-width="2.2" stroke-dasharray="2.2 1"/><path d="M525 278.5 L536.5 290" stroke="#fff" stroke-width="1.6" stroke-dasharray="1.5 1.5"/><path d="M555 278.5 L543 290.5" stroke="#000" stroke-width="2.4" stroke-dasharray="2.4 0.8"/><rect x="535.3" y="290.5" width="7" height="8" fill="#fff"/><rect x="535.3" y="290.5" width="2" height="8" fill="#888"/><rect x="540.3" y="290" width="2.4" height="10.5" fill="#000"/><rect x="535.3" y="298" width="7.4" height="2.5" fill="#000"/><g transform="translate(522.4,395.8)"><path d="M20 1 L39.5 36.5 L0.5 36.5 Z" fill="url(#gWarn)" stroke="#c89a00" stroke-width="1.5" stroke-linejoin="round"/><rect x="0.5" y="33.5" width="39" height="3.2" fill="#c89a00"/><rect x="17.3" y="12.3" width="5.5" height="12.5" fill="#000"/><rect x="17.3" y="27.5" width="5.5" height="4.3" fill="#000"/></g><g transform="translate(522.4,443.3)"><path d="M20 1 L39.5 36.5 L0.5 36.5 Z" fill="url(#gWarnSel)" stroke="#5c8a78" stroke-width="1.5" stroke-linejoin="round"/><rect x="0.5" y="33.5" width="39" height="3.2" fill="#5c8a78"/><rect x="17.3" y="12.3" width="5.5" height="12.5" fill="#0a3a6a"/><rect x="17.3" y="27.5" width="5.5" height="4.3" fill="#0a3a6a"/></g><g transform="translate(522.4,488.2)"><circle cx="20" cy="19.6" r="18.6" fill="url(#gInfo)" stroke="#8c8c8c" stroke-width="2.4"/><rect x="16" y="7" width="7" height="4.8" fill="#2048b8"/><rect x="16" y="14" width="7" height="18.5" fill="#2a58c8"/><rect x="15.5" y="14" width="2" height="18.5" fill="#8aa2d8"/></g><g transform="translate(522.4,535.6)"><circle cx="20" cy="19.6" r="18.6" fill="url(#gInfo)" stroke="#8c8c8c" stroke-width="2.4"/><rect x="16" y="7" width="7" height="4.8" fill="#2048b8"/><rect x="16" y="14" width="7" height="18.5" fill="#2a58c8"/><rect x="15.5" y="14" width="2" height="18.5" fill="#8aa2d8"/></g><g transform="translate(522.4,583.0)"><circle cx="20" cy="19.6" r="18.6" fill="url(#gInfo)" stroke="#8c8c8c" stroke-width="2.4"/><rect x="16" y="7" width="7" height="4.8" fill="#2048b8"/><rect x="16" y="14" width="7" height="18.5" fill="#2a58c8"/><rect x="15.5" y="14" width="2" height="18.5" fill="#8aa2d8"/></g><g transform="translate(522.4,630.4)"><circle cx="20" cy="19.6" r="18.6" fill="url(#gInfo)" stroke="#8c8c8c" stroke-width="2.4"/><rect x="16" y="7" width="7" height="4.8" fill="#2048b8"/><rect x="16" y="14" width="7" height="18.5" fill="#2a58c8"/><rect x="15.5" y="14" width="2" height="18.5" fill="#8aa2d8"/></g><path d="M3080 358.5 L3088.8 350.8 L3097.6 358.5 L3097.6 351.5 L3088.8 343.7 L3080 351.5 Z" fill="#606060"/><path d="M3080 649.8 L3088.8 657.6 L3097.6 649.8 L3097.6 657 L3088.8 665.9 L3080 657 Z" fill="#606060"/><path d="M3065 718 L3080.5 733.5 M3080.5 718 L3065 733.5" stroke="#000" stroke-width="5.2"/><path d="M3146.8 233 L3149.5 226.5 L3149.5 233 Z" fill="#5a3a10"/><rect x="3147" y="338" width="3" height="20" fill="#d8b860"/><rect x="3147.5" y="505" width="2" height="3" fill="#6a8ac0"/><rect x="3147" y="565" width="3" height="35" fill="#808080"/><rect x="3147" y="635" width="3" height="13" fill="#404050"/><rect x="3147" y="650" width="3" height="10" fill="#505060"/><rect x="3147.5" y="914" width="2" height="3" fill="#c0c0c0"/><rect x="3147.5" y="976" width="2" height="3" fill="#c0c0c0"/><rect x="3147.5" y="1039" width="2" height="3" fill="#c0c0c0"/><rect x="3147.5" y="1417" width="2" height="3" fill="#c0c0c0"/><rect x="3147.5" y="1479" width="2" height="3" fill="#c0c0c0"/><rect x="3147" y="1189" width="3" height="34" fill="#606060"/><rect x="3147" y="1254" width="3" height="8" fill="#f08020"/><rect x="3147" y="1306" width="3" height="29" fill="#808080"/></svg>
</body></html>
